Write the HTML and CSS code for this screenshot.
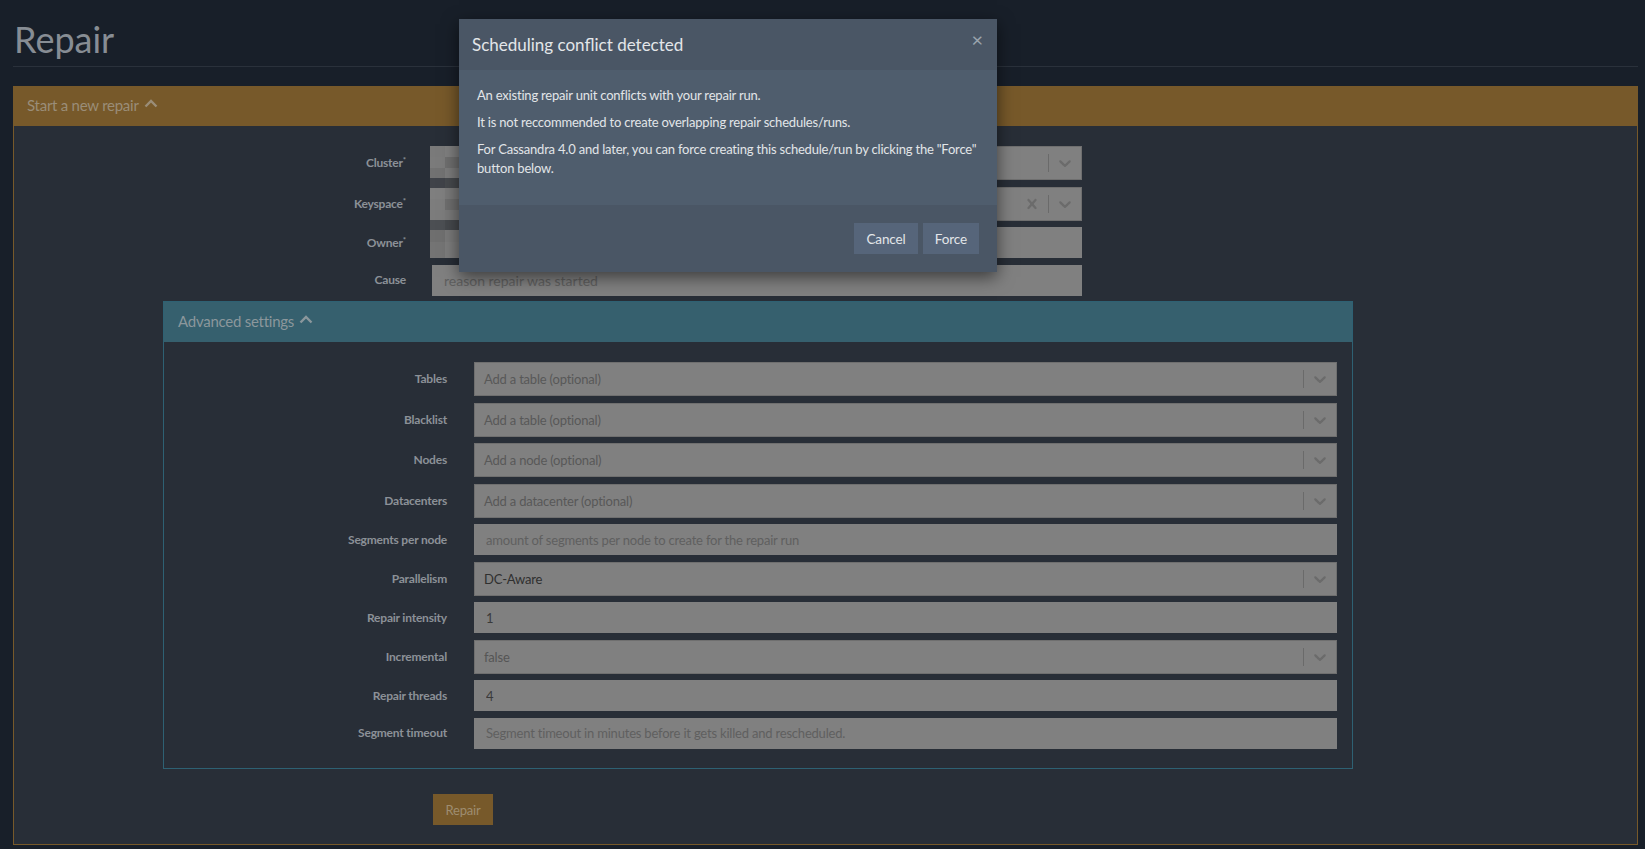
FILE: index.html
```html
<!DOCTYPE html>
<html lang="en">
<head>
<meta charset="utf-8">
<title>Repair</title>
<link rel="stylesheet" href="styles.css">
</head>
<body>
<div class="page">
  <div class="page-header"><h1>Repair</h1></div>

  <div class="panel panel-main">
    <div class="panel-heading">Start a new repair <svg class="chev-up" width="14" height="9" viewBox="0 0 14 9"><polyline points="1.5,7.5 7,2 12.5,7.5" fill="none" stroke="currentColor" stroke-width="2.4"/></svg></div>
    <div class="panel-body">
      <div class="form form-main">
        <div class="row">
          <label class="lbl">Cluster<sup>*</sup></label>
          <div class="select"><div class="sel-value"></div><div class="ind-sep"></div><div class="ind"><svg width="20" height="20" viewBox="0 0 20 20"><path d="M4.516 7.548c0.436-0.446 1.043-0.481 1.576 0l3.908 3.747 3.908-3.747c0.533-0.481 1.141-0.446 1.574 0 0.436 0.445 0.408 1.197 0 1.615-0.406 0.418-4.695 4.502-4.695 4.502-0.217 0.223-0.502 0.335-0.787 0.335s-0.57-0.112-0.789-0.335c0 0-4.287-4.084-4.695-4.502s-0.436-1.170 0-1.615z"/></svg></div></div>
        </div>
        <div class="row">
          <label class="lbl">Keyspace<sup>*</sup></label>
          <div class="select"><div class="sel-value"></div><div class="ind"><svg width="20" height="20" viewBox="0 0 20 20"><path d="M14.348 14.849c-0.469 0.469-1.229 0.469-1.697 0l-2.651-3.030-2.651 3.029c-0.469 0.469-1.229 0.469-1.697 0-0.469-0.469-0.469-1.229 0-1.697l2.758-3.15-2.759-3.152c-0.469-0.469-0.469-1.228 0-1.697s1.228-0.469 1.697 0l2.652 3.031 2.651-3.031c0.469-0.469 1.228-0.469 1.697 0s0.469 1.229 0 1.697l-2.758 3.152 2.758 3.150c0.469 0.469 0.469 1.229 0 1.698z"/></svg></div><div class="ind-sep"></div><div class="ind"><svg width="20" height="20" viewBox="0 0 20 20"><path d="M4.516 7.548c0.436-0.446 1.043-0.481 1.576 0l3.908 3.747 3.908-3.747c0.533-0.481 1.141-0.446 1.574 0 0.436 0.445 0.408 1.197 0 1.615-0.406 0.418-4.695 4.502-4.695 4.502-0.217 0.223-0.502 0.335-0.787 0.335s-0.57-0.112-0.789-0.335c0 0-4.287-4.084-4.695-4.502s-0.436-1.170 0-1.615z"/></svg></div></div>
        </div>
        <div class="row">
          <label class="lbl">Owner<sup>*</sup></label>
          <input class="input" type="text" value="">
        </div>
        <div class="row">
          <label class="lbl">Cause</label>
          <input class="input" type="text" placeholder="reason repair was started">
        </div>
      </div>

      <div class="panel panel-adv">
        <div class="panel-heading">Advanced settings <svg class="chev-up" width="14" height="9" viewBox="0 0 14 9"><polyline points="1.5,7.5 7,2 12.5,7.5" fill="none" stroke="currentColor" stroke-width="2.4"/></svg></div>
        <div class="panel-body adv-body">
          <div class="form form-adv">
            <div class="row">
              <label class="lbl">Tables</label>
              <div class="select"><div class="sel-value placeholder">Add a table (optional)</div><div class="ind-sep"></div><div class="ind"><svg width="20" height="20" viewBox="0 0 20 20"><path d="M4.516 7.548c0.436-0.446 1.043-0.481 1.576 0l3.908 3.747 3.908-3.747c0.533-0.481 1.141-0.446 1.574 0 0.436 0.445 0.408 1.197 0 1.615-0.406 0.418-4.695 4.502-4.695 4.502-0.217 0.223-0.502 0.335-0.787 0.335s-0.57-0.112-0.789-0.335c0 0-4.287-4.084-4.695-4.502s-0.436-1.170 0-1.615z"/></svg></div></div>
            </div>
            <div class="row">
              <label class="lbl">Blacklist</label>
              <div class="select"><div class="sel-value placeholder">Add a table (optional)</div><div class="ind-sep"></div><div class="ind"><svg width="20" height="20" viewBox="0 0 20 20"><path d="M4.516 7.548c0.436-0.446 1.043-0.481 1.576 0l3.908 3.747 3.908-3.747c0.533-0.481 1.141-0.446 1.574 0 0.436 0.445 0.408 1.197 0 1.615-0.406 0.418-4.695 4.502-4.695 4.502-0.217 0.223-0.502 0.335-0.787 0.335s-0.57-0.112-0.789-0.335c0 0-4.287-4.084-4.695-4.502s-0.436-1.170 0-1.615z"/></svg></div></div>
            </div>
            <div class="row">
              <label class="lbl">Nodes</label>
              <div class="select"><div class="sel-value placeholder">Add a node (optional)</div><div class="ind-sep"></div><div class="ind"><svg width="20" height="20" viewBox="0 0 20 20"><path d="M4.516 7.548c0.436-0.446 1.043-0.481 1.576 0l3.908 3.747 3.908-3.747c0.533-0.481 1.141-0.446 1.574 0 0.436 0.445 0.408 1.197 0 1.615-0.406 0.418-4.695 4.502-4.695 4.502-0.217 0.223-0.502 0.335-0.787 0.335s-0.57-0.112-0.789-0.335c0 0-4.287-4.084-4.695-4.502s-0.436-1.170 0-1.615z"/></svg></div></div>
            </div>
            <div class="row">
              <label class="lbl">Datacenters</label>
              <div class="select"><div class="sel-value placeholder">Add a datacenter (optional)</div><div class="ind-sep"></div><div class="ind"><svg width="20" height="20" viewBox="0 0 20 20"><path d="M4.516 7.548c0.436-0.446 1.043-0.481 1.576 0l3.908 3.747 3.908-3.747c0.533-0.481 1.141-0.446 1.574 0 0.436 0.445 0.408 1.197 0 1.615-0.406 0.418-4.695 4.502-4.695 4.502-0.217 0.223-0.502 0.335-0.787 0.335s-0.57-0.112-0.789-0.335c0 0-4.287-4.084-4.695-4.502s-0.436-1.170 0-1.615z"/></svg></div></div>
            </div>
            <div class="row">
              <label class="lbl">Segments per node</label>
              <input class="input input-adv" type="text" placeholder="amount of segments per node to create for the repair run">
            </div>
            <div class="row">
              <label class="lbl">Parallelism</label>
              <div class="select"><div class="sel-value value">DC-Aware</div><div class="ind-sep"></div><div class="ind"><svg width="20" height="20" viewBox="0 0 20 20"><path d="M4.516 7.548c0.436-0.446 1.043-0.481 1.576 0l3.908 3.747 3.908-3.747c0.533-0.481 1.141-0.446 1.574 0 0.436 0.445 0.408 1.197 0 1.615-0.406 0.418-4.695 4.502-4.695 4.502-0.217 0.223-0.502 0.335-0.787 0.335s-0.57-0.112-0.789-0.335c0 0-4.287-4.084-4.695-4.502s-0.436-1.170 0-1.615z"/></svg></div></div>
            </div>
            <div class="row">
              <label class="lbl">Repair intensity</label>
              <input class="input input-adv" type="text" value="1">
            </div>
            <div class="row">
              <label class="lbl">Incremental</label>
              <div class="select"><div class="sel-value muted">false</div><div class="ind-sep"></div><div class="ind"><svg width="20" height="20" viewBox="0 0 20 20"><path d="M4.516 7.548c0.436-0.446 1.043-0.481 1.576 0l3.908 3.747 3.908-3.747c0.533-0.481 1.141-0.446 1.574 0 0.436 0.445 0.408 1.197 0 1.615-0.406 0.418-4.695 4.502-4.695 4.502-0.217 0.223-0.502 0.335-0.787 0.335s-0.57-0.112-0.789-0.335c0 0-4.287-4.084-4.695-4.502s-0.436-1.170 0-1.615z"/></svg></div></div>
            </div>
            <div class="row">
              <label class="lbl">Repair threads</label>
              <input class="input input-adv" type="text" value="4">
            </div>
            <div class="row">
              <label class="lbl">Segment timeout</label>
              <input class="input input-adv" type="text" placeholder="Segment timeout in minutes before it gets killed and rescheduled.">
            </div>
          </div>
        </div>
      </div>

      <button class="btn-repair" type="button">Repair</button>
    </div>
  </div>
</div>

<div class="mosaic">
  <i class="m1"></i><i class="m2"></i><i class="m3"></i>
  <i class="m4"></i><i class="m5"></i><i class="m6"></i>
  <i class="m7"></i><i class="m8"></i><i class="m9"></i>
  <i class="d1"></i><i class="d2"></i><i class="d3"></i>
  <i class="m2"></i><i class="m1"></i><i class="m3"></i>
  <i class="m6"></i><i class="m5"></i><i class="m4"></i>
  <i class="m8"></i><i class="m1"></i><i class="m9"></i>
  <i class="d3"></i><i class="d2"></i><i class="d1"></i>
  <i class="m5"></i><i class="m1"></i><i class="m7"></i>
  <i class="m9"></i><i class="m6"></i><i class="m2"></i>
</div>

<div class="modal">
  <div class="modal-header">
    <h4 class="modal-title">Scheduling conflict detected</h4>
    <span class="close">×</span>
  </div>
  <div class="modal-body">
    <p>An existing repair unit conflicts with your repair run.</p>
    <p>It is not reccommended to create overlapping repair schedules/runs.</p>
    <p>For Cassandra 4.0 and later, you can force creating this schedule/run by clicking the "Force" button below.</p>
  </div>
  <div class="modal-footer">
    <button class="btn-modal" type="button">Cancel</button>
    <button class="btn-modal" type="button">Force</button>
  </div>
</div>
</body>
</html>
```

FILE: styles.css
```css
* { box-sizing: border-box; }

html, body {
  margin: 0;
  padding: 0;
  background: #181f29;
  font-family: Lato, "Liberation Sans", sans-serif;
  font-size: 14px;
  color: #8e949a;
  overflow: hidden;
}

.page {
  padding: 0 7px 0 13px;
}

.page-header {
  padding: 19px 0 7px 1px;
  border-bottom: 1px solid #2a313b;
}

.page-header h1 {
  margin: 0;
  font-size: 36px;
  line-height: 40px;
  font-weight: 400;
  color: #878d94;
}

.panel {
  border: 1px solid #77592a;
  background: #282e37;
}

.panel-main {
  margin-top: 19px;
}

.panel-heading {
  height: 39px;
  display: flex;
  align-items: center;
  gap: 5px;
  padding-left: 13px;
  padding-bottom: 3px;
  background: #77592a;
  color: #9a8d78;
  font-size: 15px;
  letter-spacing: -0.25px;
}

.chev-up {
  display: block;
  margin-top: -3px;
}

.panel-main > .panel-body {
  padding: 20px 0 19px 0;
}

.form {
  display: flex;
  flex-direction: column;
  gap: 6.5px;
}

.row {
  display: grid;
  align-items: center;
}

.form-main .row {
  grid-template-columns: 392px 650px;
  column-gap: 26px;
}

.form-adv .row {
  grid-template-columns: 283px 863px;
  column-gap: 27px;
}

.lbl {
  text-align: right;
  font-weight: 700;
  font-size: 12px;
  letter-spacing: -0.2px;
  color: #8c9197;
  margin-top: -1px;
}

.lbl sup {
  font-size: 8px;
  vertical-align: 4px;
  line-height: 0;
}

.select {
  height: 34px;
  display: flex;
  align-items: center;
  background: #808080;
  border: 1px solid #6f6f6f;
}

.sel-value {
  flex: 1;
  padding-left: 9px;
  font-size: 13px;
  letter-spacing: -0.2px;
  white-space: nowrap;
  overflow: hidden;
}

.sel-value.placeholder { color: #585858; }
.sel-value.value { color: #2f2f2f; }
.sel-value.muted { color: #555555; }

.ind-sep {
  width: 1px;
  height: 18px;
  background: #6a6a6a;
}

.ind {
  width: 32px;
  display: flex;
  justify-content: center;
  align-items: center;
}

.ind svg {
  display: block;
  fill: #6b6b6b;
}

.input {
  display: block;
  width: 100%;
  height: 31px;
  margin: 0;
  border: 0;
  padding: 0 12px;
  background: #808080;
  font-family: Lato, "Liberation Sans", sans-serif;
  font-size: 14px;
  color: #3a3a3a;
  outline: none;
}

.input-adv {
  font-size: 13px;
  letter-spacing: -0.2px;
}

.input::placeholder {
  color: #5f5f5f;
  opacity: 1;
}

.panel-adv {
  margin: 5.5px 0 0 149px;
  width: 1190px;
  border-color: #2e6173;
}

.panel-adv .panel-heading {
  height: 40px;
  padding-left: 14px;
  background: #36606e;
  color: #8b979c;
}

.adv-body {
  padding: 20px 0 19.5px 0;
}

.btn-repair {
  display: block;
  margin: 25px 0 0 419px;
  width: 60px;
  height: 31px;
  border: 0;
  padding: 0;
  background: #77592a;
  color: #9e8d70;
  font-family: Lato, "Liberation Sans", sans-serif;
  font-size: 13px;
  letter-spacing: -0.2px;
}

.mosaic {
  position: absolute;
  left: 430px;
  top: 146px;
  width: 44px;
  height: 112px;
  display: grid;
  grid-template-columns: 15px 14px 15px;
  grid-template-rows: 11px 11px 10px 10px 11px 11px 10px 10px 12px 16px;
}

.mosaic i { display: block; }
.mosaic .m1 { background: #7a7a7a; }
.mosaic .m2 { background: #7f7f7f; }
.mosaic .m3 { background: #767676; }
.mosaic .m4 { background: #7b7b7b; }
.mosaic .m5 { background: #6f6f6f; }
.mosaic .m6 { background: #7d7d7d; }
.mosaic .m7 { background: #727272; }
.mosaic .m8 { background: #7c7c7c; }
.mosaic .m9 { background: #747474; }
.mosaic .d1 { background: #404349; }
.mosaic .d2 { background: #46494d; }
.mosaic .d3 { background: #4c4f53; }

.modal {
  position: absolute;
  left: 459px;
  top: 19px;
  width: 538px;
  background: #4f5d6d;
  box-shadow: 0 5px 16px rgba(0, 0, 0, 0.55);
}

.modal-header {
  height: 51px;
  display: flex;
  align-items: center;
  justify-content: space-between;
  padding: 0 14px 0 13px;
  background: #4a5665;
}

.modal-title {
  margin: 0;
  font-size: 17px;
  line-height: 20px;
  font-weight: 400;
  color: #e3e6e9;
  padding-top: 1px;
}

.close {
  font-size: 20px;
  line-height: 20px;
  color: #9ba4ad;
  margin-top: -12px;
}

.modal-body {
  padding: 16px 18px 19px 18px;
  color: #e2e5e8;
  font-size: 13px;
  letter-spacing: -0.2px;
  line-height: 19px;
}

.modal-body p {
  margin: 0 0 8px 0;
}

.modal-footer {
  display: flex;
  justify-content: flex-end;
  gap: 5px;
  padding: 18px;
  background: #4a5665;
}

.btn-modal {
  height: 31px;
  padding: 0 12px;
  border: 0;
  background: #56657a;
  color: #e3e6e9;
  font-family: Lato, "Liberation Sans", sans-serif;
  font-size: 13.5px;
  letter-spacing: -0.1px;
}
```
